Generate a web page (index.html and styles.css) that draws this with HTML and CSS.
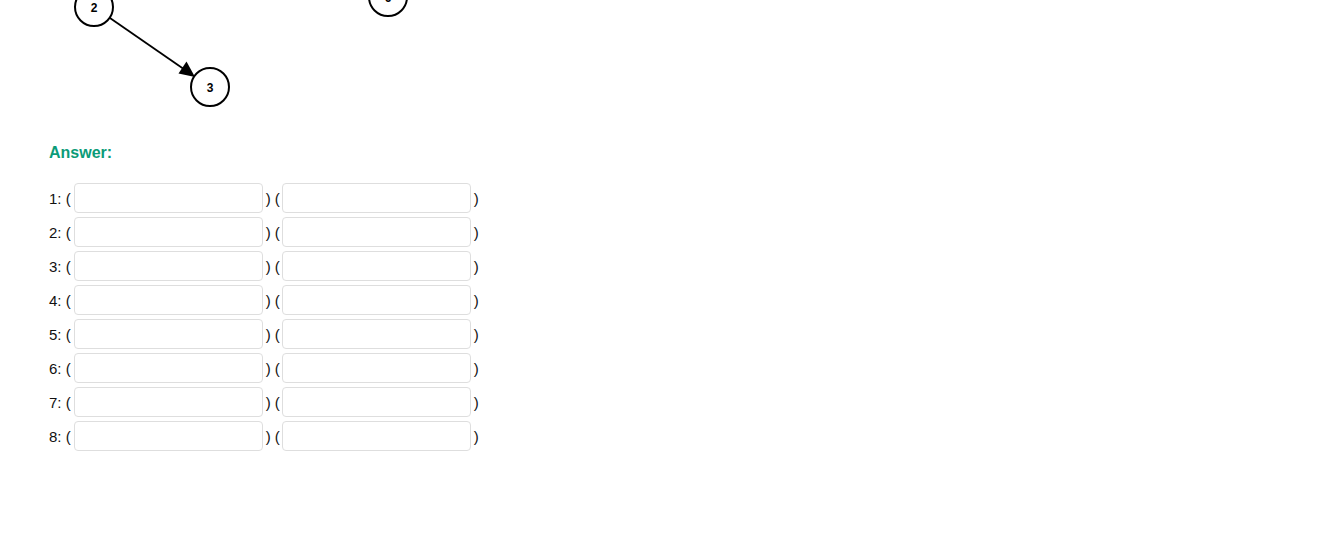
FILE: index.html
```html
<!DOCTYPE html>
<html lang="en">
<head>
<meta charset="utf-8">
<title>Graph question</title>
<link rel="stylesheet" href="styles.css">
</head>
<body>
<svg class="graph" width="500" height="122" viewBox="0 0 500 122" xmlns="http://www.w3.org/2000/svg">
  <g class="edge">
    <line x1="109.6" y1="17.8" x2="183" y2="68.5"/>
    <polygon points="195,77 178.5,73.5 186.5,61.5"/>
  </g>
  <g class="node">
    <circle cx="94" cy="7" r="19"/>
    <text x="94" y="11.5">2</text>
  </g>
  <g class="node">
    <circle cx="210" cy="87" r="19"/>
    <text x="210" y="91.5">3</text>
  </g>
  <g class="node">
    <circle cx="388" cy="-3" r="19"/>
    <text x="388" y="1.5">6</text>
  </g>
</svg>

<section class="answer">
  <h3 class="answer-title">Answer:</h3>
  <div class="rows">
    <div class="row"><span class="lbl">1: (</span><input class="field" type="text"><span class="mid">) (</span><input class="field" type="text"><span class="end">)</span></div>
    <div class="row"><span class="lbl">2: (</span><input class="field" type="text"><span class="mid">) (</span><input class="field" type="text"><span class="end">)</span></div>
    <div class="row"><span class="lbl">3: (</span><input class="field" type="text"><span class="mid">) (</span><input class="field" type="text"><span class="end">)</span></div>
    <div class="row"><span class="lbl">4: (</span><input class="field" type="text"><span class="mid">) (</span><input class="field" type="text"><span class="end">)</span></div>
    <div class="row"><span class="lbl">5: (</span><input class="field" type="text"><span class="mid">) (</span><input class="field" type="text"><span class="end">)</span></div>
    <div class="row"><span class="lbl">6: (</span><input class="field" type="text"><span class="mid">) (</span><input class="field" type="text"><span class="end">)</span></div>
    <div class="row"><span class="lbl">7: (</span><input class="field" type="text"><span class="mid">) (</span><input class="field" type="text"><span class="end">)</span></div>
    <div class="row"><span class="lbl">8: (</span><input class="field" type="text"><span class="mid">) (</span><input class="field" type="text"><span class="end">)</span></div>
  </div>
</section>
</body>
</html>
```

FILE: styles.css
```css
html, body {
  margin: 0;
  padding: 0;
  background: #fff;
}

body {
  font-family: "Liberation Sans", Arial, sans-serif;
  color: #111;
}

.graph {
  display: block;
}

.edge line {
  stroke: #000;
  stroke-width: 1.8;
}

.edge polygon {
  fill: #000;
}

.node circle {
  fill: #fff;
  stroke: #000;
  stroke-width: 2;
}

.node text {
  font-family: "Liberation Sans", sans-serif;
  font-weight: bold;
  font-size: 12px;
  text-anchor: middle;
  fill: #000;
}

.answer {
  margin-top: 22px;
  padding-left: 49px;
}

.answer-title {
  margin: 0;
  font-size: 16px;
  font-weight: bold;
  line-height: 18px;
  color: #0b9b78;
}

.rows {
  margin-top: 21px;
  display: flex;
  flex-direction: column;
  gap: 4px;
}

.row {
  display: flex;
  align-items: center;
  font-size: 15px;
  height: 30px;
}

.lbl {
  margin-right: 3px;
}

.mid {
  margin: 0 2px 0 3px;
}

.end {
  margin-left: 3px;
}

.field {
  box-sizing: border-box;
  width: 189px;
  height: 30px;
  margin: 0;
  padding: 0 6px;
  border: 1px solid #dedede;
  border-radius: 4px;
  background: #fff;
  font: inherit;
  outline: none;
}
```
